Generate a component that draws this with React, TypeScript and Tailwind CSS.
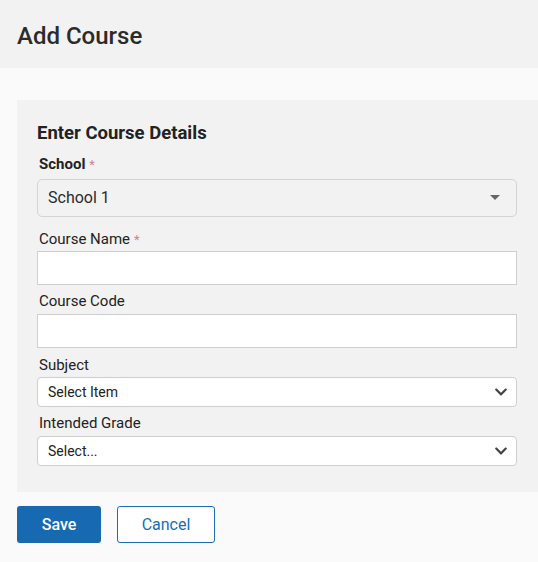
import React from "react";
import { FaChevronDown } from "react-icons/fa";

const font = { fontFamily: "Roboto, 'Liberation Sans', sans-serif" };

function Label({ text, required, bold }: { text: string; required?: boolean; bold?: boolean }) {
  return (
    <div className={`ml-[2px] h-[20px] text-[15px] leading-[20px] text-[#222] ${bold ? "font-bold" : ""}`}>
      {text}
      {required && <span className="ml-[4px] text-[13px] leading-none font-normal text-[#c98592]">*</span>}
    </div>
  );
}

function SmallSelect({ text }: { text: string }) {
  return (
    <div className="flex h-[30px] items-center justify-between rounded-[4px] border border-[#cfcfcf] bg-white pl-[10px] pr-[8px]">
      <span className="text-[14px] text-[#222]">{text}</span>
      <FaChevronDown className="h-[14px] w-[14px] text-[#444]" />
    </div>
  );
}

export default function App() {
  return (
    <div className="min-h-[562px] bg-[#fafafa]" style={font}>
      <div className="flex h-[68px] items-center bg-[#f2f2f2] pl-[17px] pt-[3px]">
        <h1 className="text-[24px] font-medium leading-[30px] text-[#2b2b2b]">Add Course</h1>
      </div>
      <div className="mt-[32px] ml-[17px] bg-[#f2f2f2] pl-[20px] pr-[21px] pt-[21px] pb-[26px]">
        <h2 className="h-[24px] text-[18.5px] font-bold leading-[24px] text-[#222]">Enter Course Details</h2>
        <div className="mt-[9px]">
          <Label text="School" required bold />
          <div className="mt-[5px] flex h-[38px] items-center justify-between rounded-[5px] border border-[#d4d4d4] bg-[#f2f2f2] pl-[10px] pr-[16px]">
            <span className="text-[16px] text-[#2b2b2b]">School 1</span>
            <svg width="10" height="6" viewBox="0 0 10 6">
              <path d="M0 0 L10 0 L5 5 Z" fill="#666" />
            </svg>
          </div>
        </div>
        <div className="mt-[12px]">
          <Label text="Course Name" required />
          <div className="mt-[2px] h-[34px] border border-[#cfcfcf] bg-white" />
        </div>
        <div className="mt-[6px]">
          <Label text="Course Code" />
          <div className="mt-[3px] h-[34px] border border-[#cfcfcf] bg-white" />
        </div>
        <div className="mt-[7px]">
          <Label text="Subject" />
          <div className="mt-[2px]">
            <SmallSelect text="Select Item" />
          </div>
        </div>
        <div className="mt-[6px]">
          <Label text="Intended Grade" />
          <div className="mt-[3px]">
            <SmallSelect text="Select..." />
          </div>
        </div>
      </div>
      <div className="mt-[14px] flex gap-[16px] pl-[17px]">
        <button className="h-[37px] w-[84px] rounded-[3px] bg-[#1769b1] text-[16px] font-medium text-white">Save</button>
        <button className="h-[37px] w-[98px] rounded-[3px] border border-[#1a6db5] bg-white text-[16px] text-[#1a6db5]">Cancel</button>
      </div>
    </div>
  );
}
